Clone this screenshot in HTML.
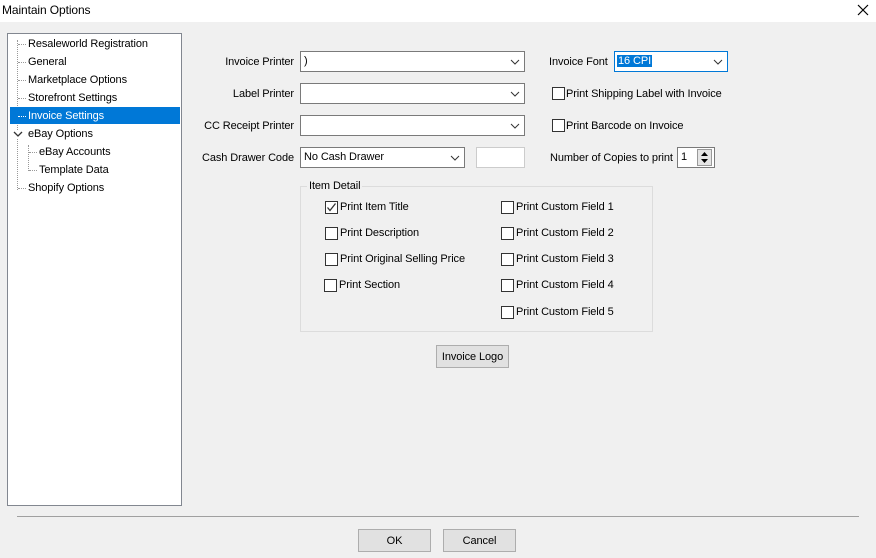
<!DOCTYPE html>
<html><head><style>
*{box-sizing:border-box;margin:0;padding:0}
body{width:876px;height:558px;background:#f0f0f0;font-family:"Liberation Sans",sans-serif;font-size:11px;line-height:15px;color:#000;position:relative;overflow:hidden;letter-spacing:-0.1px}
.a{position:absolute;white-space:nowrap}
.combo{position:absolute;background:#fff;border:1px solid #7a7a7a;height:21px;padding:2px 3px;}
.combo svg{position:absolute;right:4px;top:7px}
.cb{position:absolute;width:13px;height:13px;border:1px solid #333;background:#fff}
.btn{position:absolute;background:#e1e1e1;border:1px solid #adadad;height:23px;text-align:center;line-height:23px}
.r{text-align:right}
.dot{position:absolute;border-top:1px dotted #999;width:8px}
</style></head><body>
<div class="a" style="left:0;top:0;width:876px;height:22px;background:#fff"></div>
<div class="a" style="left:2px;top:3px;font-size:12px">Maintain Options</div>
<svg class="a" style="left:857px;top:4px" width="12" height="12"><path d="M1 1L11 11M11 1L1 11" stroke="#000" stroke-width="1.2"/></svg>

<div class="a" style="left:7px;top:33px;width:175px;height:473px;background:#fff;border:1px solid #828790"></div>
<div class="a" style="left:17px;top:40px;height:150px;border-left:1px dotted #999"></div>
<div class="a" style="left:10px;top:107px;width:170px;height:17px;background:#0078d7"></div>
<div class="dot" style="left:18px;top:44px"></div>
<div class="dot" style="left:18px;top:62px"></div>
<div class="dot" style="left:18px;top:80px"></div>
<div class="dot" style="left:18px;top:98px"></div>
<div class="dot" style="left:18px;top:116px;border-color:#fff"></div>
<div class="dot" style="left:18px;top:188px"></div>
<div class="a" style="left:28px;top:145px;height:26px;border-left:1px dotted #999"></div>
<div class="dot" style="left:29px;top:152px"></div>
<div class="dot" style="left:29px;top:170px"></div>
<div class="a" style="left:28px;top:37px">Resaleworld Registration</div>
<div class="a" style="left:28px;top:55px">General</div>
<div class="a" style="left:28px;top:73px">Marketplace Options</div>
<div class="a" style="left:28px;top:91px">Storefront Settings</div>
<div class="a" style="left:28px;top:109px;color:#fff">Invoice Settings</div>
<svg class="a" style="left:13px;top:130px;background:#fff" width="10" height="8"><path d="M1 2L5 6L9 2" stroke="#333" fill="none" stroke-width="1.3"/></svg>
<div class="a" style="left:28px;top:127px">eBay Options</div>
<div class="a" style="left:39px;top:145px">eBay Accounts</div>
<div class="a" style="left:39px;top:163px">Template Data</div>
<div class="a" style="left:28px;top:181px">Shopify Options</div>

<div class="a r" style="left:180px;width:114px;top:55px">Invoice Printer</div>
<div class="a r" style="left:180px;width:114px;top:87px">Label Printer</div>
<div class="a r" style="left:180px;width:114px;top:119px">CC Receipt Printer</div>
<div class="a r" style="left:180px;width:114px;top:151px">Cash Drawer Code</div>
<div class="combo" style="left:300px;top:51px;width:225px">)<svg width="10" height="6"><path d="M1 1L5 5L9 1" stroke="#333" fill="none"/></svg></div>
<div class="combo" style="left:300px;top:83px;width:225px"><svg width="10" height="6"><path d="M1 1L5 5L9 1" stroke="#333" fill="none"/></svg></div>
<div class="combo" style="left:300px;top:115px;width:225px"><svg width="10" height="6"><path d="M1 1L5 5L9 1" stroke="#333" fill="none"/></svg></div>
<div class="combo" style="left:300px;top:147px;width:165px">No Cash Drawer<svg width="10" height="6"><path d="M1 1L5 5L9 1" stroke="#333" fill="none"/></svg></div>
<div class="combo" style="left:476px;top:147px;width:49px;border-color:#ccc"></div>

<div class="a" style="left:549px;top:55px">Invoice Font</div>
<div class="combo" style="left:614px;top:51px;width:114px;border-color:#0078d7;padding:2px 2px"><span style="background:#0078d7;color:#fff;padding:0 1px">16 CPI</span><svg width="10" height="6"><path d="M1 1L5 5L9 1" stroke="#333" fill="none"/></svg></div>
<div class="cb" style="left:552px;top:87px"></div><div class="a" style="left:566px;top:87px">Print Shipping Label with Invoice</div>
<div class="cb" style="left:552px;top:119px"></div><div class="a" style="left:566px;top:119px">Print Barcode on Invoice</div>
<div class="a" style="left:550px;top:151px">Number of Copies to print</div>
<div class="a" style="left:677px;top:147px;width:38px;height:21px;background:#fff;border:1px solid #7a7a7a;padding:2px 3px">1</div>
<div class="a" style="left:697px;top:149px;width:15px;height:17px;background:#e5e5e5;border:1px solid #999"></div>
<svg class="a" style="left:700px;top:150px" width="9" height="15"><path d="M1 6L4.5 2L8 6Z M1 9L4.5 13L8 9Z" fill="#000"/></svg>

<div class="a" style="left:300px;top:186px;width:353px;height:146px;border:1px solid #dcdcdc"></div>
<div class="a" style="left:307px;top:179px;background:#f0f0f0;padding:0 2px">Item Detail</div>
<div class="cb" style="left:325px;top:201px"></div>
<svg class="a" style="left:326px;top:202px" width="11" height="11"><path d="M1.5 5.5L4 8.5L9.5 1.5" stroke="#333" fill="none" stroke-width="1.3"/></svg>
<div class="a" style="left:340px;top:200px">Print Item Title</div>
<div class="cb" style="left:325px;top:227px"></div><div class="a" style="left:340px;top:226px">Print Description</div>
<div class="cb" style="left:325px;top:253px"></div><div class="a" style="left:340px;top:252px">Print Original Selling Price</div>
<div class="cb" style="left:324px;top:279px"></div><div class="a" style="left:339px;top:278px">Print Section</div>
<div class="cb" style="left:501px;top:201px"></div><div class="a" style="left:516px;top:200px">Print Custom Field 1</div>
<div class="cb" style="left:501px;top:227px"></div><div class="a" style="left:516px;top:226px">Print Custom Field 2</div>
<div class="cb" style="left:501px;top:253px"></div><div class="a" style="left:516px;top:252px">Print Custom Field 3</div>
<div class="cb" style="left:501px;top:279px"></div><div class="a" style="left:516px;top:278px">Print Custom Field 4</div>
<div class="cb" style="left:501px;top:306px"></div><div class="a" style="left:516px;top:305px">Print Custom Field 5</div>

<div class="btn" style="left:436px;top:345px;width:73px">Invoice Logo</div>
<div class="a" style="left:17px;top:516px;width:842px;border-top:1px solid #a0a0a0"></div>
<div class="btn" style="left:358px;top:529px;width:73px">OK</div>
<div class="btn" style="left:443px;top:529px;width:73px">Cancel</div>
</body></html>
